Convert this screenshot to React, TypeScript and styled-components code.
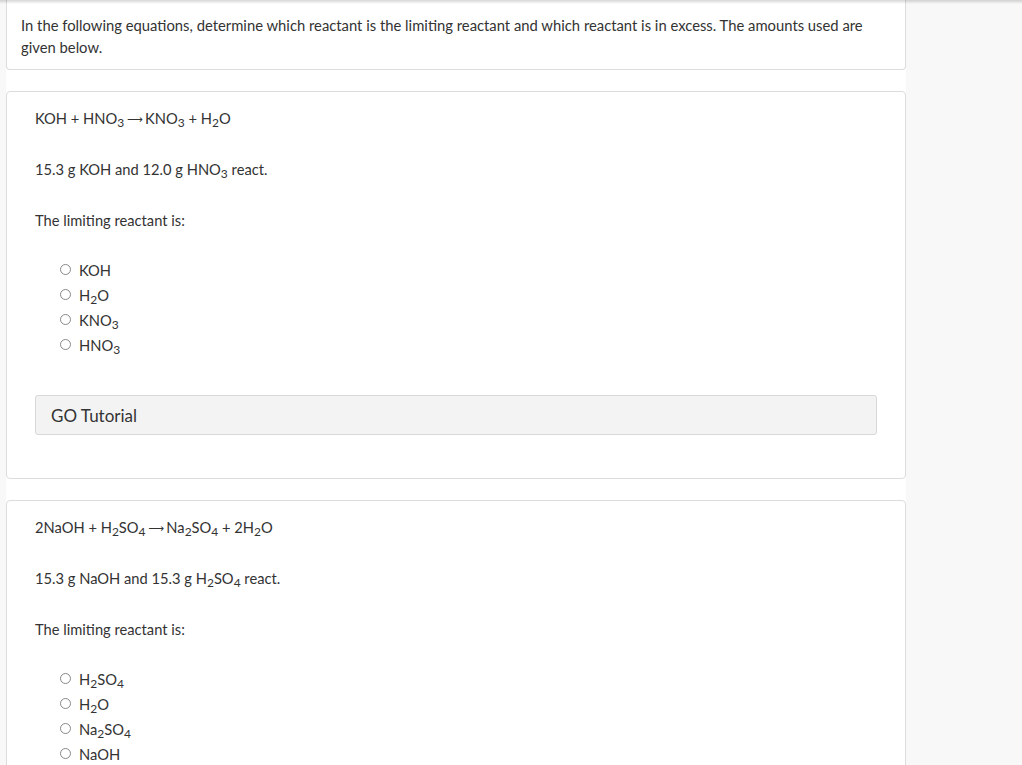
import styled, { createGlobalStyle } from "styled-components";

const GlobalStyle = createGlobalStyle`
   html, body {
      margin: 0;
      padding: 0;
      background: #f8f8f8;
      font-family: Lato, "Open Sans", "Liberation Sans", sans-serif;
      color: #333;
   }
`;

const TopShade = styled.div`
   height: 4px;
   margin-bottom: -4px;
   position: relative;
   z-index: 2;
   background: linear-gradient(to bottom, rgba(0, 0, 0, 0.16), rgba(0, 0, 0, 0));
`;

const Page = styled.div`
   display: flex;
   padding-left: 6px;
   min-height: 765px;
`;

const Main = styled.main`
   width: 900px;
   background: #fff;
   display: flex;
   flex-direction: column;
   gap: 21px;
`;

const Intro = styled.div`
   border: 1px solid #dcdcdc;
   border-top: none;
   border-radius: 0 0 4px 4px;
   padding: 14px 14px 11px;
   font-size: 14.8px;
   line-height: 22px;
`;

const Card = styled.section`
   border: 1px solid #dcdcdc;
   border-radius: 4px;
   padding: 16px 28px 43px;
`;

const Para = styled.p<{ $gap?: number }>`
   margin: 0 0 ${({ $gap }) => $gap ?? 31}px;
   font-size: 14.7px;
   line-height: 20px;
`;

const Sub = styled.sub`
   font-size: 12px;
   line-height: 0;
   vertical-align: -3px;
`;

const Arrow = styled.span`
   display: inline-block;
   margin: 0 2px 0 3px;
   font-family: "DejaVu Sans", sans-serif;
   font-size: 11px;
   line-height: 0;
   vertical-align: 1px;
`;

const Options = styled.ul`
   list-style: none;
   margin: 27px 0 0;
   padding: 0 0 0 25px;
`;

const Option = styled.li`
   display: flex;
   align-items: center;
   gap: 8px;
   height: 25px;
   font-size: 14.7px;
`;

const Radio = styled.span`
   width: 9px;
   height: 9px;
   border: 1px solid #888;
   border-radius: 50%;
   background: #fff;
   flex: none;
`;

const Tutorial = styled.div`
   margin-top: 38px;
   height: 38px;
   border: 1px solid #d8d8d8;
   border-radius: 3px;
   background: #f3f3f3;
   display: flex;
   align-items: center;
   padding: 0 15px;
   font-size: 17px;
`;

type Part = string | [string, string];

function Formula({ parts }: { parts: Part[] }) {
   return (
      <>
         {parts.map((p, i) =>
            typeof p === "string" ? (
               p === "->" ? (
                  <Arrow key={i}>⟶</Arrow>
               ) : (
                  <span key={i}>{p}</span>
               )
            ) : (
               <Sub key={i}>{p[1]}</Sub>
            )
         )}
      </>
   );
}

const s = (n: string): Part => ["", n];

const questions: {
   equation: Part[];
   amounts: Part[];
   options: Part[][];
}[] = [
   {
      equation: ["KOH + HNO", s("3"), "->", "KNO", s("3"), " + H", s("2"), "O"],
      amounts: ["15.3 g KOH and 12.0 g HNO", s("3"), " react."],
      options: [["KOH"], ["H", s("2"), "O"], ["KNO", s("3")], ["HNO", s("3")]],
   },
   {
      equation: [
         "2NaOH + H",
         s("2"),
         "SO",
         s("4"),
         "->",
         "Na",
         s("2"),
         "SO",
         s("4"),
         " + 2H",
         s("2"),
         "O",
      ],
      amounts: ["15.3 g NaOH and 15.3 g H", s("2"), "SO", s("4"), " react."],
      options: [
         ["H", s("2"), "SO", s("4")],
         ["H", s("2"), "O"],
         ["Na", s("2"), "SO", s("4")],
         ["NaOH"],
      ],
   },
];

export default function App() {
   return (
      <>
         <GlobalStyle />
         <TopShade />
         <Page>
            <Main>
               <Intro>
                  In the following equations, determine which reactant is the limiting
                  reactant and which reactant is in excess. The amounts used are given
                  below.
               </Intro>
               {questions.map((q, i) => (
                  <Card key={i}>
                     <Para>
                        <Formula parts={q.equation} />
                     </Para>
                     <Para>
                        <Formula parts={q.amounts} />
                     </Para>
                     <Para $gap={0}>The limiting reactant is:</Para>
                     <Options>
                        {q.options.map((o, j) => (
                           <Option key={j}>
                              <Radio />
                              <span>
                                 <Formula parts={o} />
                              </span>
                           </Option>
                        ))}
                     </Options>
                     <Tutorial>GO Tutorial</Tutorial>
                  </Card>
               ))}
            </Main>
         </Page>
      </>
   );
}
